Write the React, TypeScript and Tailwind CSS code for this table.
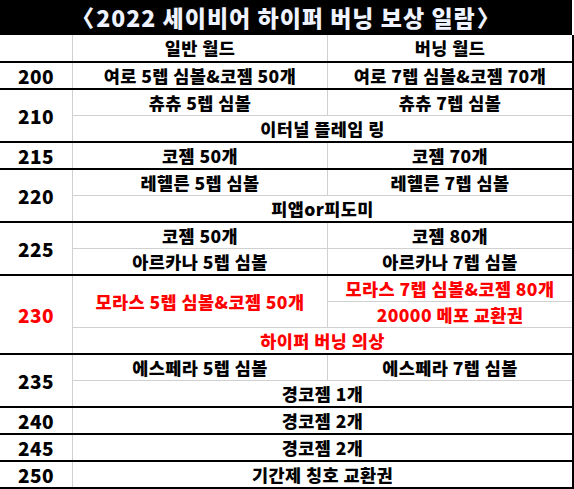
import React from 'react';

const FONT = '"Noto Sans CJK KR", "Noto Sans", sans-serif';

type Sub =
  | { kind: 'split'; a: string; b: string }
  | { kind: 'span'; text: string };

type Group = { level: string; red?: boolean; rows: Sub[] };

const groups: Group[] = [
  { level: '200', rows: [{ kind: 'split', a: '여로 5렙 심볼&코젬 50개', b: '여로 7렙 심볼&코젬 70개' }] },
  {
    level: '210',
    rows: [
      { kind: 'split', a: '츄츄 5렙 심볼', b: '츄츄 7렙 심볼' },
      { kind: 'span', text: '이터널 플레임 링' },
    ],
  },
  { level: '215', rows: [{ kind: 'split', a: '코젬 50개', b: '코젬 70개' }] },
  {
    level: '220',
    rows: [
      { kind: 'split', a: '레헬른 5렙 심볼', b: '레헬른 7렙 심볼' },
      { kind: 'span', text: '피앱or피도미' },
    ],
  },
  {
    level: '225',
    rows: [
      { kind: 'split', a: '코젬 50개', b: '코젬 80개' },
      { kind: 'split', a: '아르카나 5렙 심볼', b: '아르카나 7렙 심볼' },
    ],
  },
];

const tail: Group[] = [
  {
    level: '235',
    rows: [
      { kind: 'split', a: '에스페라 5렙 심볼', b: '에스페라 7렙 심볼' },
      { kind: 'span', text: '경코젬 1개' },
    ],
  },
  { level: '240', rows: [{ kind: 'span', text: '경코젬 2개' }] },
  { level: '245', rows: [{ kind: 'span', text: '경코젬 2개' }] },
  { level: '250', rows: [{ kind: 'span', text: '기간제 칭호 교환권' }] },
];

// 한 칸 — 가운데 정렬된 굵은 글씨
function Cell({ children, className = '' }: { children?: React.ReactNode; className?: string }) {
  return (
    <div className={`flex items-center justify-center whitespace-nowrap text-[17.5px] leading-none font-black tracking-[0.4px] ${className}`}>
      {children}
    </div>
  );
}

function SubRow({ row, first }: { row: Sub; first: boolean }) {
  const top = first ? 'h-[25px]' : 'h-[26px] border-t border-[#d0d0d0]';
  if (row.kind === 'span') {
    return <Cell className={`${top} w-full`}>{row.text}</Cell>;
  }
  return (
    <div className={`flex ${top}`}>
      <Cell className="w-[255px] border-r border-[#d0d0d0]">{row.a}</Cell>
      <Cell className="flex-1">{row.b}</Cell>
    </div>
  );
}

function Level({ text, red }: { text: string; red?: boolean }) {
  return (
    <div
      className={`flex w-[73px] shrink-0 items-center justify-center border-r border-[#d0d0d0] text-[19px] leading-none font-black tracking-[0.5px] ${red ? 'text-[#ff0000]' : 'text-black'}`}
    >
      {text}
    </div>
  );
}

function GroupRow({ g }: { g: Group }) {
  return (
    <div className="flex border-b-2 border-black">
      <Level text={g.level} red={g.red} />
      <div className="flex flex-1 flex-col">
        {g.rows.map((r, i) => (
          <SubRow key={i} row={r} first={i === 0} />
        ))}
      </div>
    </div>
  );
}

export default function App() {
  return (
    <div className="h-[489px] w-[574px] overflow-hidden bg-white text-black" style={{ fontFamily: FONT }}>
      <div className="flex h-[35px] w-[572px] items-center justify-center bg-black text-[23px] leading-none font-black tracking-[1px] text-[#eef3ff]">
        <span className="mr-[1px]">〈</span>2022 세이비어 하이퍼 버닝 보상 일람<span className="ml-[1px]">〉</span>
      </div>

      <div className="w-[574px] border-r-2 border-black">
        {/* 헤더 */}
        <div className="flex h-[28px] border-b-2 border-black">
          <div className="w-[73px] shrink-0 border-r border-[#d0d0d0]" />
          <Cell className="w-[255px] border-r border-[#d0d0d0]">일반 월드</Cell>
          <Cell className="flex-1">버닝 월드</Cell>
        </div>

        {groups.map((g) => (
          <GroupRow key={g.level} g={g} />
        ))}

        {/* 230 — 빨간 줄 */}
        <div className="flex border-b-2 border-black text-[#ff0000]">
          <Level text="230" red />
          <div className="flex flex-1 flex-col">
            <div className="flex h-[51px]">
              <Cell className="w-[255px] border-r border-[#d0d0d0]">모라스 5렙 심볼&amp;코젬 50개</Cell>
              <div className="flex flex-1 flex-col">
                <Cell className="h-[25px]">모라스 7렙 심볼&amp;코젬 80개</Cell>
                <Cell className="h-[26px] border-t border-[#d0d0d0]">20000 메포 교환권</Cell>
              </div>
            </div>
            <Cell className="h-[26px] border-t border-[#d0d0d0]">하이퍼 버닝 의상</Cell>
          </div>
        </div>

        {tail.map((g) => (
          <GroupRow key={g.level} g={g} />
        ))}
      </div>
    </div>
  );
}
